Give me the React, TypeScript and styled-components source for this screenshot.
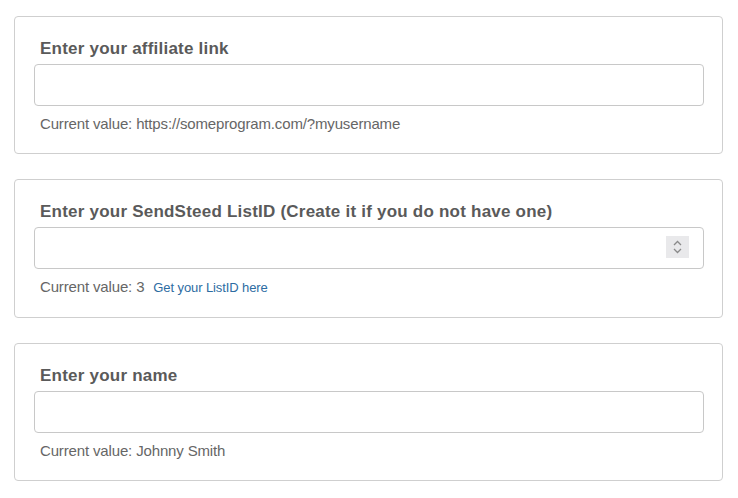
import React from 'react';
import styled, { createGlobalStyle } from 'styled-components';

const GlobalStyle = createGlobalStyle`
  html, body {
    margin: 0;
    padding: 0;
    background: #fff;
    font-family: "Liberation Sans", Arial, sans-serif;
  }
`;

const Page = styled.div`
  width: 738px;
  padding: 16px 15px 16px 14px;
  box-sizing: border-box;
  display: flex;
  flex-direction: column;
  gap: 25px;
`;

const Card = styled.div`
  border: 1px solid #cfcfcf;
  border-radius: 4px;
  padding: 20px 18px 19px 19px;
  display: flex;
  flex-direction: column;
`;

const Title = styled.label`
  font-size: 17px;
  font-weight: bold;
  letter-spacing: 0.22px;
  line-height: 24px;
  color: #5a5a5a;
  padding-left: 6px;
  margin-bottom: 3px;
`;

const Field = styled.div`
  position: relative;
`;

const Input = styled.input`
  display: block;
  width: 100%;
  box-sizing: border-box;
  height: 42px;
  border: 1px solid #c8c8c8;
  border-radius: 4px;
  padding: 0 12px;
  font-size: 14px;
  font-family: inherit;
  outline: none;
  appearance: textfield;
  &::-webkit-inner-spin-button,
  &::-webkit-outer-spin-button {
    -webkit-appearance: none;
    margin: 0;
  }
`;

const Spinner = styled.div`
  position: absolute;
  right: 15px;
  top: 9px;
  width: 23px;
  height: 22px;
  background: #e9e9eb;
  display: flex;
  align-items: center;
  justify-content: center;
`;

const Help = styled.div`
  margin-top: 8px;
  padding-left: 6px;
  font-size: 15px;
  letter-spacing: -0.15px;
  line-height: 20px;
  color: #666;
  display: flex;
  align-items: baseline;
  gap: 9px;
`;

const HelpLink = styled.a`
  font-size: 13px;
  letter-spacing: -0.1px;
  color: #2d6ca2;
  text-decoration: none;
`;

type FormCardProps = {
  id: string;
  title: string;
  current: string;
  number?: boolean;
  link?: string;
};

const FormCard = ({ id, title, current, number, link }: FormCardProps) => (
  <Card>
    <Title htmlFor={id}>{title}</Title>
    <Field>
      <Input id={id} type={number ? 'number' : 'text'} />
      {number && (
        <Spinner>
          <svg width="11" height="16" viewBox="0 0 11 16" fill="none" stroke="#8a8a8a" strokeWidth="1.3">
            <path d="M2 6 L5.5 2.5 L9 6" />
            <path d="M2 10 L5.5 13.5 L9 10" />
          </svg>
        </Spinner>
      )}
    </Field>
    <Help>
      <span>Current value: {current}</span>
      {link && <HelpLink href="#">{link}</HelpLink>}
    </Help>
  </Card>
);

export default function App() {
  return (
    <Page>
      <GlobalStyle />
      <FormCard
        id="affiliate"
        title="Enter your affiliate link"
        current="https://someprogram.com/?myusername"
      />
      <FormCard
        id="listid"
        title="Enter your SendSteed ListID (Create it if you do not have one)"
        current="3"
        number
        link="Get your ListID here"
      />
      <FormCard id="name" title="Enter your name" current="Johnny Smith" />
    </Page>
  );
}
